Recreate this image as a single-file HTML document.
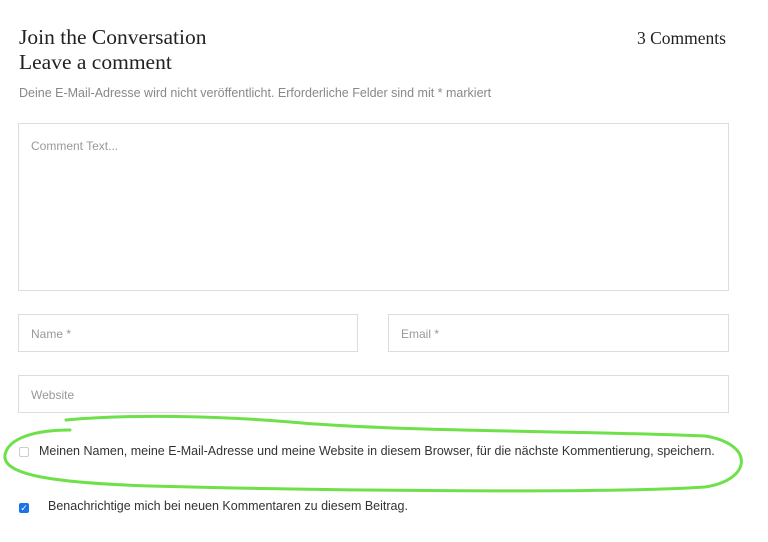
<!DOCTYPE html>
<html><head><meta charset="utf-8"><style>
body{margin:0;width:768px;height:542px;background:#fff;position:relative;overflow:hidden;font-family:"Liberation Sans",sans-serif}
.a{position:absolute}
.h{font-family:"Liberation Serif",serif;font-size:21.5px;color:#222}
.box{position:absolute;border:1px solid #ddd;box-sizing:border-box;font-size:12px;color:#999}
.box span{position:absolute;left:12px}
.t{font-size:12.5px;color:#333;white-space:nowrap}
</style></head><body>
<div class="a h" style="left:19px;top:25px">Join the Conversation</div>
<div class="a h" style="left:19px;top:50px">Leave a comment</div>
<div class="a h" style="left:637px;top:28px;font-size:17.5px">3 Comments</div>
<div class="a" style="left:19px;top:86px;font-size:12.5px;color:#888;white-space:nowrap">Deine E-Mail-Adresse wird nicht veröffentlicht. Erforderliche Felder sind mit * markiert</div>
<div class="box" style="left:18px;top:123px;width:711px;height:168px"><span style="top:15px">Comment Text...</span></div>
<div class="box" style="left:18px;top:314px;width:340px;height:38px"><span style="top:12px">Name *</span></div>
<div class="box" style="left:388px;top:314px;width:341px;height:38px"><span style="top:12px">Email *</span></div>
<div class="box" style="left:18px;top:375px;width:711px;height:38px"><span style="top:12px">Website</span></div>
<div class="a" style="left:19px;top:447px;width:8px;height:8px;border:1px solid #ccc;border-radius:2px"></div>
<div class="a t" style="left:39px;top:444px">Meinen Namen, meine E-Mail-Adresse und meine Website in diesem Browser, für die nächste Kommentierung, speichern.</div>
<div class="a" style="left:19px;top:503px;width:10px;height:10px;background:#1a73e8;border-radius:2px;color:#fff;font-size:9px;line-height:10px;text-align:center">✓</div>
<div class="a t" style="left:48px;top:499px">Benachrichtige mich bei neuen Kommentaren zu diesem Beitrag.</div>
<svg class="a" style="left:0;top:0" width="768" height="542"><path d="M66,420 C130,414 220,416 290,422 C400,432 600,431 705,436 C755,444 752,480 705,487 C600,494 300,490 150,486 C60,483 2,476 5,455 C8,438 35,430 70,430" fill="none" stroke="#6ee04a" stroke-width="3" stroke-linecap="round"/></svg>
</body></html>
